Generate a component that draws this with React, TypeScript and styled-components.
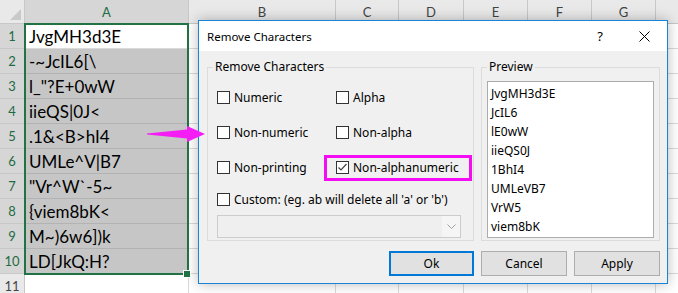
import React from 'react';
import styled, { createGlobalStyle } from 'styled-components';

const Global = createGlobalStyle`
  html, body { margin: 0; padding: 0; background: #ffffff; overflow: hidden; }
  body { width: 678px; height: 293px; }
`;

const COLS = [
  { label: '', w: 25 },
  { label: 'A', w: 164 },
  { label: 'B', w: 147 },
  { label: 'C', w: 63 },
  { label: 'D', w: 65 },
  { label: 'E', w: 64 },
  { label: 'F', w: 64 },
  { label: 'G', w: 64 },
  { label: '', w: 23 },
];

const CELLS = [
  'JvgMH3d3E',
  '-~JcIL6[\\',
  'l_"?E+0wW',
  'iieQS|0J<',
  '.1&<B>hI4',
  'UMLe^V|B7',
  '"Vr^W`-5~',
  '{viem8bK<',
  'M~)6w6])k',
  'LD[JkQ:H?',
  '',
];

const PREVIEW = ['JvgMH3d3E', 'JcIL6', 'lE0wW', 'iieQS0J', '1BhI4', 'UMLeVB7', 'VrW5', 'viem8bK'];

const Sheet = styled.div`
  position: relative;
  width: 678px;
  height: 293px;
  overflow: hidden;
  font-family: Lato, 'Liberation Sans', sans-serif;
`;

const Row = styled.div<{ $h: number }>`
  display: flex;
  height: ${p => p.$h}px;
`;

const HeadCell = styled.div<{ $w: number; $sel?: boolean }>`
  flex: 0 0 ${p => p.$w}px;
  box-sizing: border-box;
  height: 100%;
  border-right: 1px solid #c8c8c8;
  border-bottom: 1px solid ${p => (p.$sel ? '#217346' : '#c8c8c8')};
  background: ${p => (p.$sel ? '#d6d6d6' : '#e9e9e9')};
  color: ${p => (p.$sel ? '#1e6b41' : '#444444')};
  font-size: 13px;
  display: flex;
  align-items: center;
  justify-content: center;
  position: relative;
`;

const Corner = styled.div`
  position: absolute;
  right: 3px;
  bottom: 3px;
  width: 0;
  height: 0;
  border-left: 11px solid transparent;
  border-bottom: 11px solid #c9c9c9;
`;

const RowHead = styled.div<{ $sel?: boolean }>`
  flex: 0 0 25px;
  box-sizing: border-box;
  height: 100%;
  border-right: 1px solid ${p => (p.$sel ? '#217346' : '#c8c8c8')};
  border-bottom: 1px solid #c8c8c8;
  background: ${p => (p.$sel ? '#d6d6d6' : '#e9e9e9')};
  color: ${p => (p.$sel ? '#1e6b41' : '#444444')};
  font-size: 13px;
  display: flex;
  align-items: flex-end;
  justify-content: center;
  padding-bottom: 4px;
`;

const Cell = styled.div<{ $w: number; $fill?: 'sel' | 'none' }>`
  flex: 0 0 ${p => p.$w}px;
  box-sizing: border-box;
  height: 100%;
  border-right: 1px solid ${p => (p.$fill === 'sel' ? '#b3b3b3' : '#dadada')};
  border-bottom: 1px solid ${p => (p.$fill === 'sel' ? '#b3b3b3' : '#dadada')};
  background: ${p => (p.$fill === 'sel' ? '#c6c6c6' : '#ffffff')};
  color: #000000;
  font-size: 17px;
  white-space: pre;
  display: flex;
  align-items: flex-end;
  padding: 0 0 1px 4px;
  overflow: hidden;
`;

const Selection = styled.div`
  position: absolute;
  left: 24px;
  top: 23px;
  width: 165px;
  height: 252px;
  box-sizing: border-box;
  border: 2px solid #217346;
  pointer-events: none;
`;

const Handle = styled.div`
  position: absolute;
  left: 184px;
  top: 271px;
  width: 6px;
  height: 6px;
  background: #217346;
  outline: 1px solid #ffffff;
`;

const Arrow = styled.svg`
  position: absolute;
  left: 0;
  top: 0;
  pointer-events: none;
  z-index: 3;
`;

/* ---------- dialog ---------- */

const Dialog = styled.div`
  position: absolute;
  left: 198px;
  top: 20px;
  width: 470px;
  height: 264px;
  box-sizing: border-box;
  border: 1px solid #1883d7;
  background: #f0f0f0;
  box-shadow: 0 0 12px rgba(0, 0, 0, 0.28);
  display: flex;
  flex-direction: column;
  font-family: 'Noto Sans', 'Liberation Sans', sans-serif;
  font-size: 12px;
  color: #000000;
  z-index: 2;
`;

const TitleBar = styled.div`
  height: 30px;
  background: #ffffff;
  display: flex;
  align-items: center;
  padding-left: 8px;
`;

const Title = styled.div`
  flex: 1;
  font-size: 11.5px;
`;

const TitleBtn = styled.div<{ $w: number }>`
  width: ${p => p.$w}px;
  height: 30px;
  display: flex;
  align-items: center;
  justify-content: center;
  font-size: 13px;
`;

const Body = styled.div`
  flex: 1;
  display: flex;
  flex-direction: column;
  padding: 8px 7px 7px 8px;
`;

const Groups = styled.div`
  display: flex;
  gap: 7px;
`;

const Group = styled.fieldset<{ $w: number }>`
  margin: 0;
  padding: 0;
  width: ${p => p.$w}px;
  height: 182px;
  box-sizing: border-box;
  border: 1px solid #dcdcdc;
  min-width: 0;
`;

const Legend = styled.legend`
  padding: 0 2px;
  margin-left: 5px;
  font-size: 12px;
  line-height: 16px;
`;

const Options = styled.div`
  display: grid;
  grid-template-columns: 119px 1fr;
  grid-template-rows: 35px 35px 35px 28px;
  padding: 5px 0 0 9px;
`;

const Option = styled.label<{ $hl?: boolean; $span?: boolean }>`
  display: flex;
  align-items: center;
  gap: 4px;
  white-space: nowrap;
  grid-column: ${p => (p.$span ? '1 / span 2' : 'auto')};
  ${p =>
    p.$hl
      ? `
    align-self: center;
    justify-self: start;
    height: 26px;
    box-sizing: border-box;
    margin-left: -12px;
    padding: 0 10px 0 9px;
    border: 3px solid #f40cf4;
  `
      : ''}
`;

const Box = styled.span`
  width: 13px;
  height: 13px;
  box-sizing: border-box;
  border: 1px solid #333333;
  background: #ffffff;
  display: flex;
  align-items: center;
  justify-content: center;
  flex: 0 0 13px;
`;

const Combo = styled.div`
  margin: 2px 0 0 9px;
  width: 244px;
  height: 23px;
  box-sizing: border-box;
  border: 1px solid #cccccc;
  background: #efefef;
  display: flex;
  justify-content: flex-end;
`;

const ComboArrow = styled.div`
  width: 18px;
  height: 100%;
  background: #f5f5f5;
  display: flex;
  align-items: center;
  justify-content: center;
`;

const List = styled.div`
  margin: 6px 5px 0 5px;
  height: 157px;
  box-sizing: border-box;
  border: 1px solid #acacac;
  background: #ffffff;
  padding: 2px 0 0 3px;
  display: flex;
  flex-direction: column;
`;

const ListItem = styled.div`
  height: 19px;
  line-height: 19px;
  font-size: 12px;
`;

const Buttons = styled.div`
  display: flex;
  justify-content: flex-end;
  gap: 7px;
  margin-top: 10px;
`;

const Button = styled.div<{ $w: number; $default?: boolean }>`
  width: ${p => p.$w}px;
  height: 25px;
  box-sizing: border-box;
  background: #e1e1e1;
  border: ${p => (p.$default ? '2px solid #0078d7' : '1px solid #adadad')};
  display: flex;
  align-items: center;
  justify-content: center;
  font-size: 12px;
`;

const Check = ({ on }: { on?: boolean }) => (
  <Box>
    {on && (
      <svg width="11" height="11" viewBox="0 0 11 11">
        <path d="M1.5 5.5 L4 8 L9.5 2" fill="none" stroke="#444" strokeWidth="1.2" />
      </svg>
    )}
  </Box>
);

export default function App() {
  return (
    <Sheet>
      <Global />
      <Row $h={24}>
        {COLS.map((c, i) => (
          <HeadCell key={i} $w={c.w} $sel={c.label === 'A'}>
            {i === 0 ? <Corner /> : c.label}
          </HeadCell>
        ))}
      </Row>
      {CELLS.map((txt, r) => (
        <Row $h={25} key={r}>
          <RowHead $sel={r < 10}>{r + 1}</RowHead>
          {COLS.slice(1).map((c, ci) => (
            <Cell key={ci} $w={c.w} $fill={ci === 0 && r > 0 && r < 10 ? 'sel' : 'none'}>
              {ci === 0 ? txt : ''}
            </Cell>
          ))}
        </Row>
      ))}
      <Selection />
      <Handle />

      <Dialog>
        <TitleBar>
          <Title>Remove Characters</Title>
          <TitleBtn $w={42}>?</TitleBtn>
          <TitleBtn $w={46}>
            <svg width="11" height="11" viewBox="0 0 11 11">
              <path d="M0.5 0.5 L10.5 10.5 M10.5 0.5 L0.5 10.5" stroke="#000" strokeWidth="1" />
            </svg>
          </TitleBtn>
        </TitleBar>
        <Body>
          <Groups>
            <Group $w={267}>
              <Legend>Remove Characters</Legend>
              <Options>
                <Option><Check />Numeric</Option>
                <Option><Check />Alpha</Option>
                <Option><Check />Non-numeric</Option>
                <Option><Check />Non-alpha</Option>
                <Option><Check />Non-printing</Option>
                <Option $hl><Check on />Non-alphanumeric</Option>
                <Option $span><Check />Custom: (eg. ab will delete all 'a' or 'b')</Option>
              </Options>
              <Combo>
                <ComboArrow>
                  <svg width="9" height="6" viewBox="0 0 9 6">
                    <path d="M0.5 0.5 L4.5 4.5 L8.5 0.5" fill="none" stroke="#a0a0a0" strokeWidth="1" />
                  </svg>
                </ComboArrow>
              </Combo>
            </Group>
            <Group $w={179}>
              <Legend>Preview</Legend>
              <List>
                {PREVIEW.map(p => (
                  <ListItem key={p}>{p}</ListItem>
                ))}
              </List>
            </Group>
          </Groups>
          <Buttons>
            <Button $w={85} $default>Ok</Button>
            <Button $w={86}>Cancel</Button>
            <Button $w={86}>Apply</Button>
          </Buttons>
        </Body>
      </Dialog>

      <Arrow width="678" height="293" viewBox="0 0 678 293">
        <polygon
          points="147,133.5 187,129.5 187,126 205,134 187,142 187,138.5 147,134.5"
          fill="#f41ef4"
        />
      </Arrow>
    </Sheet>
  );
}
